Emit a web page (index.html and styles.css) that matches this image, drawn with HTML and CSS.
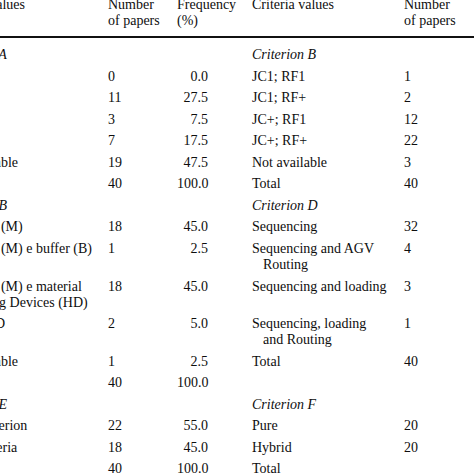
FILE: index.html
```html
<!DOCTYPE html>
<html>
<head>
<meta charset="utf-8">
<link rel="stylesheet" href="styles.css">
</head>
<body>
<table class="tbl">
  <colgroup>
    <col class="c-crit-l">
    <col class="c-num">
    <col class="c-freq">
    <col class="c-crit-r">
    <col class="c-num-r">
    <col class="c-freq-r">
  </colgroup>
  <thead>
    <tr>
      <th class="lab">Criteria values</th>
      <th>Number<br>of papers</th>
      <th>Frequency<br>(%)</th>
      <th class="lab">Criteria values</th>
      <th>Number<br>of papers</th>
      <th class="ghost">Frequency<br>(%)</th>
    </tr>
  </thead>
  <tbody>
    <tr class="first">
      <td class="lab crit">Criterion A</td><td></td><td class="fq"></td>
      <td class="lab crit">Criterion B</td><td></td><td class="fq"></td>
    </tr>
    <tr>
      <td class="lab">FS</td><td>0</td><td class="fq">0.0</td>
      <td class="lab">JC1; RF1</td><td>1</td><td class="fq">2.5</td>
    </tr>
    <tr>
      <td class="lab">JS</td><td>11</td><td class="fq">27.5</td>
      <td class="lab">JC1; RF+</td><td>2</td><td class="fq">5.0</td>
    </tr>
    <tr>
      <td class="lab">FMS</td><td>3</td><td class="fq">7.5</td>
      <td class="lab">JC+; RF1</td><td>12</td><td class="fq">30.0</td>
    </tr>
    <tr>
      <td class="lab">FAS</td><td>7</td><td class="fq">17.5</td>
      <td class="lab">JC+; RF+</td><td>22</td><td class="fq">55.0</td>
    </tr>
    <tr>
      <td class="lab">Not available</td><td>19</td><td class="fq">47.5</td>
      <td class="lab">Not available</td><td>3</td><td class="fq">7.5</td>
    </tr>
    <tr>
      <td class="lab">Total</td><td>40</td><td class="fq">100.0</td>
      <td class="lab">Total</td><td>40</td><td class="fq">100.0</td>
    </tr>
    <tr>
      <td class="lab crit">Criterion B</td><td></td><td class="fq"></td>
      <td class="lab crit">Criterion D</td><td></td><td class="fq"></td>
    </tr>
    <tr>
      <td class="lab">Machines (M)</td><td>18</td><td class="fq">45.0</td>
      <td class="lab">Sequencing</td><td>32</td><td class="fq">80.0</td>
    </tr>
    <tr>
      <td class="lab">Machines (M) e buffer (B)</td><td>1</td><td class="fq">2.5</td>
      <td class="lab">Sequencing and AGV<br>Routing</td><td>4</td><td class="fq">10.0</td>
    </tr>
    <tr>
      <td class="lab">Machines (M) e material<br>Handling Devices (HD)</td><td>18</td><td class="fq">45.0</td>
      <td class="lab">Sequencing and loading</td><td>3</td><td class="fq">7.5</td>
    </tr>
    <tr>
      <td class="lab">M, B e HD</td><td>2</td><td class="fq">5.0</td>
      <td class="lab">Sequencing, loading<br>and Routing</td><td>1</td><td class="fq">2.5</td>
    </tr>
    <tr>
      <td class="lab">Not available</td><td>1</td><td class="fq">2.5</td>
      <td class="lab">Total</td><td>40</td><td class="fq">100.0</td>
    </tr>
    <tr>
      <td class="lab">Total</td><td>40</td><td class="fq">100.0</td>
      <td class="lab"></td><td></td><td class="fq"></td>
    </tr>
    <tr>
      <td class="lab crit">Criterion E</td><td></td><td class="fq"></td>
      <td class="lab crit">Criterion F</td><td></td><td class="fq"></td>
    </tr>
    <tr>
      <td class="lab">Mono criterion</td><td>22</td><td class="fq">55.0</td>
      <td class="lab">Pure</td><td>20</td><td class="fq">50.0</td>
    </tr>
    <tr>
      <td class="lab">Multi criteria</td><td>18</td><td class="fq">45.0</td>
      <td class="lab">Hybrid</td><td>20</td><td class="fq">50.0</td>
    </tr>
    <tr>
      <td class="lab">Total</td><td>40</td><td class="fq">100.0</td>
      <td class="lab">Total</td><td></td><td class="fq"></td>
    </tr>
  </tbody>
</table>
</body>
</html>
```

FILE: styles.css
```css
html, body {
  margin: 0;
  padding: 0;
  background: #ffffff;
  overflow: hidden;
}

.tbl {
  font-family: "Liberation Serif", "Times New Roman", serif;
  font-size: 14px;
  line-height: 16px;
  color: #0e0e0e;
  border-collapse: collapse;
  table-layout: fixed;
  width: 612px;
  margin-left: -57px;
  margin-top: -3px;
}

.c-crit-l { width: 165px; }
.c-num { width: 69px; }
.c-freq { width: 75px; }
.c-crit-r { width: 152px; }
.c-num-r { width: 70px; }
.c-freq-r { width: 81px; }

.tbl th {
  font-weight: normal;
  text-align: left;
  vertical-align: top;
  padding: 0 0 7px 0;
  border-bottom: 2px solid #111111;
  box-shadow: 0 1px 0 #9a9a9a;
}

.tbl th.ghost {
  color: #c8c8c8;
}

.tbl td {
  padding: 2.77px 0;
  vertical-align: top;
  text-align: left;
  white-space: nowrap;
}

.tbl tr.first td {
  padding-top: 9.2px;
}

.tbl td.lab {
  padding-left: 11px;
  text-indent: -11px;
}

.tbl th.lab {
  padding-left: 0;
}

.tbl td.fq {
  text-align: right;
  padding-right: 44px;
}

.tbl td.crit {
  font-style: italic;
}
```
